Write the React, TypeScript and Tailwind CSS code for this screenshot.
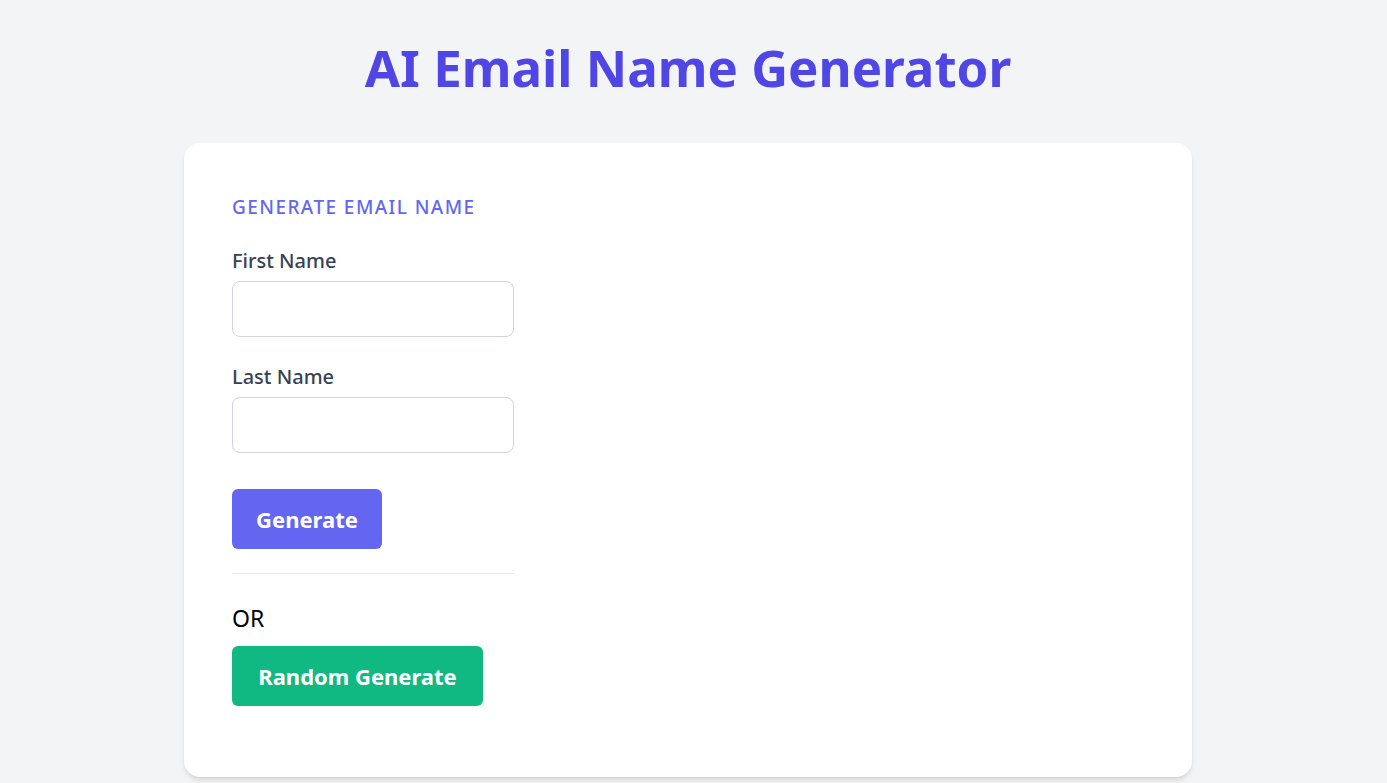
import React, { useState } from "react";

const font = { fontFamily: '"Noto Sans", "Open Sans", sans-serif' };

const Field = ({ label, value, onChange }: { label: string; value: string; onChange: (v: string) => void }) => (
  <div className="flex flex-col">
    <label className="text-[20px] font-medium leading-7 text-[#374151]">{label}</label>
    <input
      value={value}
      onChange={(e) => onChange(e.target.value)}
      className="mt-[6px] h-[56px] w-full rounded-lg border border-[#d1d5db] bg-white px-3 text-lg outline-none focus:border-[#818cf8]"
    />
  </div>
);

export default function App() {
  const [first, setFirst] = useState("");
  const [last, setLast] = useState("");

  return (
    <div className="min-h-screen bg-[#f3f4f6] pr-[11px]" style={font}>
      <div className="flex flex-col items-center pt-[43px]">
        <h1 className="text-[51px] leading-[48px] font-bold text-[#4f46e5]">AI Email Name Generator</h1>
        <div className="mt-[52px] w-[1008px] rounded-2xl bg-white px-12 pt-[50px] pb-[71px] shadow-[0_4px_6px_-1px_rgba(0,0,0,0.1),0_2px_4px_-2px_rgba(0,0,0,0.1)]">
          <div className="flex w-[282px] flex-col">
            <h2 className="text-[19px] leading-7 font-medium uppercase tracking-[0.075em] text-[#6366f1]">Generate Email Name</h2>
            <div className="mt-[26px] flex flex-col gap-[26px]">
              <Field label="First Name" value={first} onChange={setFirst} />
              <Field label="Last Name" value={last} onChange={setLast} />
            </div>
            <button className="mt-9 h-[60px] w-[150px] rounded-md bg-[#6366f1] text-[22px] font-bold text-white">
              Generate
            </button>
            <div className="mt-6 border-t border-[#e5e7eb]" />
            <p className="mt-[30px] text-[23px] leading-7 text-black">OR</p>
            <button className="mt-[14px] h-[60px] w-[251px] rounded-md bg-[#10b981] text-[22px] font-bold text-white">
              Random Generate
            </button>
          </div>
        </div>
      </div>
    </div>
  );
}
